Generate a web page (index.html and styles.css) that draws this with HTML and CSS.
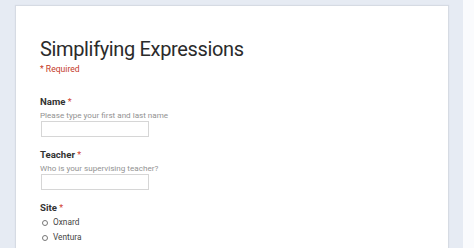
FILE: index.html
```html
<!DOCTYPE html>
<html>
<head>
<meta charset="utf-8">
<link rel="stylesheet" href="styles.css">
</head>
<body>
<div class="page">
  <div class="bg">
    <div class="card">
      <h1 class="title">Simplifying Expressions</h1>
      <div class="req">* Required</div>
      <div class="q q-first">
        <div class="label">Name <span class="star">*</span></div>
        <div class="help">Please type your first and last name</div>
        <div class="input"></div>
      </div>
      <div class="q">
        <div class="label">Teacher <span class="star">*</span></div>
        <div class="help">Who is your supervising teacher?</div>
        <div class="input"></div>
      </div>
      <div class="q">
        <div class="label">Site <span class="star">*</span></div>
        <div class="opts">
          <div class="opt"><span class="radio"></span>Oxnard</div>
          <div class="opt"><span class="radio"></span>Ventura</div>
        </div>
      </div>
    </div>
  </div>
  <div class="edge"></div>
</div>
</body>
</html>
```
FILE: styles.css
```css
html, body { margin: 0; padding: 0; }
body { width: 474px; height: 248px; overflow: hidden; background: #fff; font-family: Roboto, "Liberation Sans", sans-serif; }
.page { display: flex; height: 248px; }
.bg { width: 463px; background: #e6ebf3; padding: 6px 15px 0 16px; box-sizing: border-box; }
.card { background: #fff; height: 260px; box-shadow: 0 0 1px 1px #d6dbe3; padding: 31px 0 0 24px; box-sizing: border-box; }
.edge { flex: 1; background: #fafbfd; }
.title { margin: 0; font-weight: 400; font-size: 20px; line-height: 24px; color: #2b2b2b; letter-spacing: -0.35px; }
.req { color: #c53929; font-size: 8.6px; margin-top: 3px; line-height: 11px; }
.q { margin-top: 11px; }
.q-first { margin-top: 20px; }
.label { font-size: 9.6px; font-weight: 700; color: #333; line-height: 13px; }
.star { color: #d23f31; font-weight: 400; font-size: 9px; }
.help { font-size: 8.1px; color: #929292; line-height: 11px; margin-top: 1px; }
.input { width: 106px; height: 14px; border: 1px solid #d6d6d6; margin-left: 1px; }
.opts { display: flex; flex-direction: column; gap: 4px; margin-top: 2px; }
.opt { display: flex; align-items: center; font-size: 8.3px; color: #444; line-height: 11px; }
.radio { width: 4px; height: 4px; border: 1px solid #777; border-radius: 50%; margin: 0 5px 0 2px; }
```
